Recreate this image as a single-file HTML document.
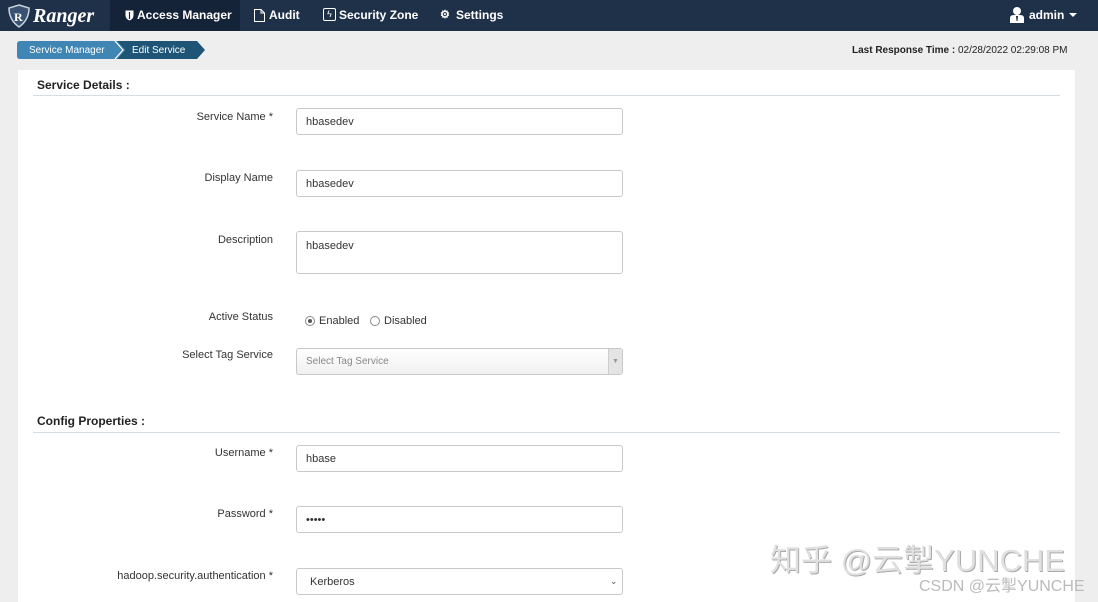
<!DOCTYPE html>
<html><head><meta charset="utf-8"><style>
*{box-sizing:border-box;margin:0;padding:0}
body{width:1098px;height:602px;overflow:hidden;background:#eeeeee;font-family:"Liberation Sans",Arial,sans-serif;font-size:11px;color:#333;position:relative}
.nav{position:absolute;left:0;top:0;width:1098px;height:31px;background:#1f3149}
.nav .t{position:absolute;top:0;height:31px;line-height:30px;color:#fff;font-weight:bold;font-size:12px}
.abs{position:absolute}
.panel{position:absolute;left:18px;top:70px;width:1057px;height:532px;background:#ffffff}
.sec{position:absolute;left:37px;font-weight:bold;font-size:12px;color:#222}
.hr{position:absolute;left:33px;width:1027px;height:1px;background:#8fa4b3;border-bottom:1px solid #d5dde3}
.lbl{position:absolute;right:825px;font-size:11px;color:#333;text-align:right;white-space:nowrap}
.inp{position:absolute;left:296px;width:327px;height:27px;border:1px solid #c8c8c8;border-radius:3px;background:#fff;padding:7px 9px;font-size:11px;color:#333}
</style></head><body>
<div class="nav">
 <svg class="abs" style="left:7px;top:4px" width="24" height="24" viewBox="0 0 24 24"><path d="M12 1 L22 4 Q22 16 12 23 Q2 16 2 4Z" fill="#3a5272" stroke="#c9d3de" stroke-width="1.5"/><text x="7" y="17" fill="#fff" font-size="12" font-weight="bold" font-family="Liberation Serif">R</text></svg>
 <div class="t" style="left:33px;font-family:'Liberation Serif',serif;font-style:italic;font-size:20px;line-height:33px">Ranger</div>
 <div class="abs" style="left:110px;top:0;width:130px;height:31px;background:#142338"></div>
 <svg class="abs" style="left:125px;top:10px" width="9" height="11" viewBox="0 0 9 11"><path d="M0.5 0.5 H8.5 V5 Q8.5 9 4.5 10.5 Q0.5 9 0.5 5Z" fill="#fff"/><path d="M4.5 2 V9" stroke="#142338" stroke-width="1.2"/></svg>
 <div class="t" style="left:137px">Access Manager</div>
 <svg class="abs" style="left:254px;top:9px" width="11" height="13" viewBox="0 0 11 13"><path d="M0.5 0.5 H7 L10.5 4 V12.5 H0.5Z M7 0.5 V4 H10.5" fill="none" stroke="#fff"/></svg>
 <div class="t" style="left:269px">Audit</div>
 <div class="abs" style="left:323px;top:8px;width:13px;height:13px;border:1.5px solid #fff;border-radius:2px;color:#fff;font-size:9px;line-height:10px;text-align:center">ϟ</div>
 <div class="t" style="left:339px">Security Zone</div>
 <div class="t" style="left:440px;font-size:11px">⚙</div>
 <div class="t" style="left:456px">Settings</div>
 <svg class="abs" style="left:1009px;top:6px" width="16" height="17" viewBox="0 0 16 17"><circle cx="8" cy="5" r="4" fill="#fff"/><path d="M1 17 L1 12 Q1 9 5 9 L11 9 Q15 9 15 12 L15 17Z" fill="#fff"/><path d="M7 10 L9 10 L8.5 15 L7.5 15Z" fill="#1f3149"/></svg>
 <div class="t" style="left:1029px">admin</div>
 <div class="abs" style="left:1069px;top:13px;border-left:4px solid transparent;border-right:4px solid transparent;border-top:4px solid #fff"></div>
</div>
<svg class="abs" style="left:17px;top:41px" width="190" height="18"><path d="M3 0 H100 L108 9 L100 18 H3 Q0 18 0 15 V3 Q0 0 3 0Z" fill="#3f86b5"/><path d="M100 0 H180 L188 9 L180 18 H100 L108 9Z" fill="#1e5577"/><path d="M98 0 L106 9 L98 18" stroke="#fff" fill="none" stroke-width="1.2"/></svg>
<div class="abs" style="left:29px;top:45px;color:#fff;font-size:10px">Service Manager</div>
<div class="abs" style="left:132px;top:45px;color:#fff;font-size:10px">Edit Service</div>
<div class="abs" style="left:852px;top:45px;font-size:10px;color:#222"><b>Last Response Time :</b> 02/28/2022 02:29:08 PM</div>
<div class="panel"></div>
<div class="sec" style="top:78px">Service Details :</div>
<div class="hr" style="top:95px"></div>
<div class="lbl" style="top:111px">Service Name *</div>
<div class="inp" style="top:108px">hbasedev</div>
<div class="lbl" style="top:172px">Display Name</div>
<div class="inp" style="top:170px">hbasedev</div>
<div class="lbl" style="top:234px">Description</div>
<div class="inp" style="top:231px;height:43px;padding-top:8px">hbasedev</div>
<div class="lbl" style="top:311px">Active Status</div>
<div class="abs" style="left:305px;top:316px;width:10px;height:10px;border:1px solid #888;border-radius:50%;background:#fff"><div style="margin:2px;width:4px;height:4px;border-radius:50%;background:#555"></div></div>
<div class="abs" style="left:319px;top:315px">Enabled</div>
<div class="abs" style="left:370px;top:316px;width:10px;height:10px;border:1px solid #888;border-radius:50%;background:#fff"></div>
<div class="abs" style="left:384px;top:315px">Disabled</div>
<div class="lbl" style="top:349px">Select Tag Service</div>
<div class="inp" style="top:348px;background:linear-gradient(#fff,#f0f0f0);color:#888;font-size:10px">Select Tag Service</div>
<div class="abs" style="left:608px;top:349px;width:14px;height:25px;background:#e4e4e4;border-left:1px solid #ccc;color:#999;font-size:7px;text-align:center;line-height:25px">▼</div>
<div class="sec" style="top:414px">Config Properties :</div>
<div class="hr" style="top:432px"></div>
<div class="lbl" style="top:447px">Username *</div>
<div class="inp" style="top:445px">hbase</div>
<div class="lbl" style="top:508px">Password *</div>
<div class="inp" style="top:506px">•••••</div>
<div class="lbl" style="top:570px">hadoop.security.authentication *</div>
<div class="inp" style="top:568px;padding-left:13px">Kerberos</div>
<div class="abs" style="left:610px;top:576px;font-size:9px;color:#555">⌄</div>
<div class="abs" style="left:770px;top:535px;font-size:31px;color:#e0e0e0;font-family:'Liberation Sans','Noto Sans CJK SC',sans-serif;text-shadow:1px 1px 0 #aaa">知乎 @云掣YUNCHE</div>
<div class="abs" style="left:919px;top:572px;font-size:16px;color:#bbb;font-family:'Liberation Sans','Noto Sans CJK SC',sans-serif">CSDN @云掣YUNCHE</div>
</body></html>
